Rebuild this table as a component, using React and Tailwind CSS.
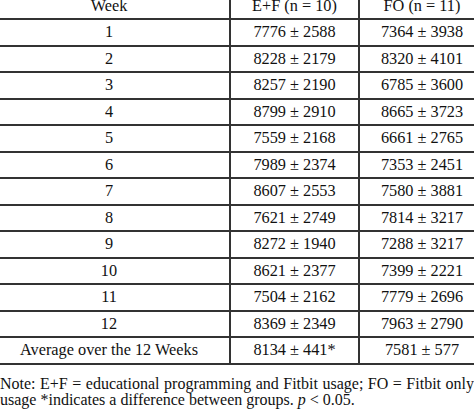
import React from 'react'

const rows = [
    ['1', '7776 ± 2588', '7364 ± 3938'],
    ['2', '8228 ± 2179', '8320 ± 4101'],
    ['3', '8257 ± 2190', '6785 ± 3600'],
    ['4', '8799 ± 2910', '8665 ± 3723'],
    ['5', '7559 ± 2168', '6661 ± 2765'],
    ['6', '7989 ± 2374', '7353 ± 2451'],
    ['7', '8607 ± 2553', '7580 ± 3881'],
    ['8', '7621 ± 2749', '7814 ± 3217'],
    ['9', '8272 ± 1940', '7288 ± 3217'],
    ['10', '8621 ± 2377', '7399 ± 2221'],
    ['11', '7504 ± 2162', '7779 ± 2696'],
    ['12', '8369 ± 2349', '7963 ± 2790'],
    ['Average over the 12 Weeks', '8134 ± 441*', '7581 ± 577'],
]

function Row({ cells }) {
    return (
        <div className="grid grid-cols-[242px_129px_124px] h-[26.5px] border-b-2 border-[#333]">
            {cells.map((c, i) => (
                <div
                    key={i}
                    className={`flex items-center justify-center ${i < 2 ? 'border-r-2 border-[#333]' : ''}`}
                >
                    {c}
                </div>
            ))}
        </div>
    )
}

export default function App() {
    return (
        <div className="w-[474px] h-[412px] overflow-hidden bg-white text-[#111] font-['Liberation_Serif',serif]">
            <div className="w-[495px] -ml-[11px] -mt-[6.5px] text-[16.3px] leading-none">
                <Row cells={['Week', 'E+F (n = 10)', 'FO (n = 11)']} />
                {rows.map((r, i) => (
                    <Row key={i} cells={r} />
                ))}
            </div>
            <p className="mt-[11px] w-[474px] text-[16px] leading-[16px] text-justify">
                Note: E+F = educational programming and Fitbit usage; FO = Fitbit only usage *indicates a difference between groups. <i>p</i> &lt; 0.05.
            </p>
        </div>
    )
}
